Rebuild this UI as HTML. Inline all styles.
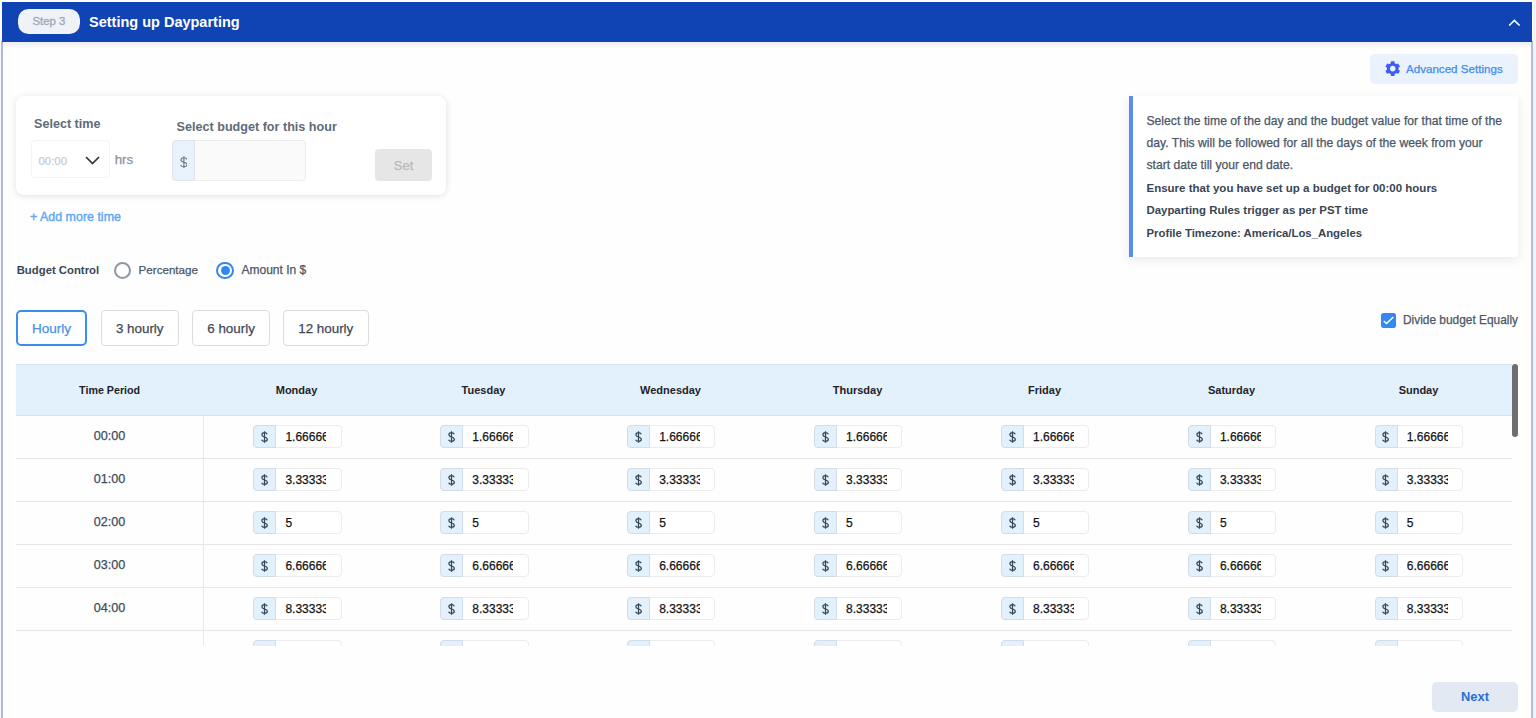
<!DOCTYPE html>
<html><head><meta charset="utf-8">
<style>
*{box-sizing:border-box;margin:0;padding:0}
html,body{width:1536px;height:718px;overflow:hidden;background:#fff;font-family:"Liberation Sans",sans-serif}
.b{position:absolute}
.t{position:absolute;white-space:nowrap;line-height:1}
</style></head><body>
<div class="b" style="left:0.00px;top:0.00px;width:1536.00px;height:718.00px;background:#fff"></div>
<div class="b" style="left:1533.00px;top:0.00px;width:3.00px;height:718.00px;background:#f3f4f5"></div>
<div class="b" style="left:0.00px;top:42.00px;width:1.00px;height:676.00px;background:#f7f7f4"></div>
<div class="b" style="left:2.00px;top:41.00px;width:1530.00px;height:677.00px;background:#fefefe"></div>
<div class="b" style="left:1.00px;top:41.00px;width:2.00px;height:677.00px;background:#aabae2"></div>
<div class="b" style="left:1531.00px;top:41.00px;width:2.00px;height:677.00px;background:#afbee2"></div>
<div class="b" style="left:2.00px;top:2.00px;width:1530.00px;height:40.00px;background:#1043b4"></div>
<div class="b" style="left:3.00px;top:42.00px;width:1528.00px;height:6.50px;background:linear-gradient(#eeeeee,rgba(254,254,254,0))"></div>
<div class="b" style="left:17.80px;top:9.40px;width:62.00px;height:24.50px;background:#eff2f7;border-radius:10.5px"></div>
<div class="t" style="left:32.50px;top:16.45px;font-size:11.4px;font-weight:normal;color:#9eabb8;-webkit-text-stroke:0.35px #9eabb8;">Step 3</div>
<div class="t" style="left:89.00px;top:15.03px;font-size:14.5px;font-weight:bold;color:#fff;">Setting up Dayparting</div>
<svg class="b" style="left:1508px;top:17.6px" width="13" height="10" viewBox="0 0 13 10"><path d="M1.7 7 L6.4 2.4 L11.1 7" stroke="#fff" stroke-width="1.7" fill="none" stroke-linecap="round"/></svg>
<div class="b" style="left:1370.00px;top:54.00px;width:148.00px;height:30.00px;background:#eaf2fd;border-radius:5px"></div>
<svg class="b" style="left:1384.8px;top:60.6px" width="15.4" height="15.4" viewBox="0 0 512 512"><path fill="#3d5cf5" d="M487.4 315.7l-42.6-24.6c4.3-23.2 4.3-47 0-70.2l42.6-24.6c4.9-2.8 7.1-8.6 5.5-14-11.1-35.6-30-67.8-54.7-94.6-3.8-4.1-10-5.1-14.8-2.3L380.8 110c-17.9-15.400-38.5-27.300-60.8-35.100V25.800c0-5.600-3.900-10.500-9.400-11.700-36.700-8.200-74.300-7.800-109.200 0-5.500 1.200-9.400 6.100-9.400 11.700V75c-22.200 7.900-42.800 19.800-60.800 35.100L88.700 85.500c-4.900-2.800-11-1.900-14.800 2.300-24.700 26.700-43.600 58.900-54.700 94.600-1.700 5.400.6 11.200 5.500 14L67.300 221c-4.300 23.200-4.300 47 0 70.200l-42.600 24.600c-4.900 2.800-7.100 8.600-5.500 14 11.100 35.600 30 67.800 54.700 94.600 3.800 4.100 10 5.100 14.800 2.300l42.600-24.600c17.900 15.400 38.500 27.300 60.800 35.100v49.200c0 5.600 3.900 10.500 9.400 11.700 36.700 8.200 74.300 7.800 109.200 0 5.500-1.200 9.400-6.100 9.400-11.700v-49.200c22.200-7.900 42.800-19.800 60.800-35.100l42.600 24.600c4.900 2.800 11 1.900 14.800-2.300 24.700-26.700 43.600-58.900 54.700-94.600 1.500-5.500-.7-11.300-5.600-14.100zM256 350c-51.900 0-94-42.100-94-94s42.100-94 94-94 94 42.100 94 94-42.100 94-94 94z"/></svg>
<div class="t" style="left:1406.00px;top:62.78px;font-size:11.6px;font-weight:normal;color:#3f8bf0;-webkit-text-stroke:0.25px #3f8bf0;">Advanced Settings</div>
<div class="b" style="left:16.00px;top:96.00px;width:429.50px;height:99.00px;background:#fff;border-radius:8px;box-shadow:0 1px 6px rgba(0,0,0,0.13)"></div>
<div class="t" style="left:34.00px;top:117.83px;font-size:12.6px;font-weight:bold;color:#5f6b78;">Select time</div>
<div class="b" style="left:30.50px;top:140.30px;width:79.50px;height:38.10px;background:#fff;border:1px solid #f3f3f3;border-radius:4px"></div>
<div class="t" style="left:38.50px;top:155.55px;font-size:11.4px;font-weight:normal;color:#c6ccd4;-webkit-text-stroke:0.25px #c6ccd4;">00:00</div>
<svg class="b" style="left:84px;top:154px" width="17" height="12" viewBox="0 0 17 12"><path d="M2 3 L8.5 9.6 L15 3" stroke="#333" stroke-width="1.7" fill="none"/></svg>
<div class="t" style="left:114.70px;top:152.74px;font-size:13.3px;font-weight:normal;color:#8a939e;-webkit-text-stroke:0.25px #8a939e;">hrs</div>
<div class="t" style="left:176.60px;top:120.73px;font-size:12.6px;font-weight:bold;color:#5f6b78;">Select budget for this hour</div>
<div class="b" style="left:172.00px;top:140.40px;width:134.00px;height:41.00px;background:#fafafa;border:1px solid #ececec;border-radius:4px"></div>
<div class="b" style="left:172.00px;top:140.40px;width:23.00px;height:41.00px;background:#e8f2fd;border:1px solid #dfe6ee;border-radius:4px 0 0 4px"></div>
<svg class="b" style="left:179.6px;top:155.6px" width="7.8" height="12.6" viewBox="0 0 7 12" preserveAspectRatio="none"><path d="M6.3 3.3 C5.8 2.3 4.8 1.7 3.5 1.7 C1.9 1.7 0.9 2.6 0.9 3.8 C0.9 5.2 2.1 5.6 3.5 6 C5.1 6.4 6.3 7 6.3 8.3 C6.3 9.6 5.1 10.3 3.5 10.3 C2.1 10.3 1 9.7 0.6 8.7 M3.5 0.2 V11.8" stroke="#6b7785" stroke-width="1.0" fill="none"/></svg>
<div class="b" style="left:375.00px;top:149.00px;width:57.00px;height:32.40px;background:#e6e6e6;border-radius:4px"></div>
<div class="t" style="left:103.50px;width:600px;text-align:center;top:159.00px;font-size:13px;font-weight:normal;color:#b9b9b9;-webkit-text-stroke:0.25px #b9b9b9;">Set</div>
<div class="t" style="left:30.00px;top:211.26px;font-size:12.45px;font-weight:normal;color:#63a6f5;-webkit-text-stroke:0.4px #63a6f5;">+ Add more time</div>
<div class="b" style="left:1129.00px;top:96.00px;width:389.00px;height:160.90px;background:#fff;box-shadow:0 3px 10px rgba(20,30,60,0.09)"></div>
<div class="b" style="left:1129.00px;top:96.00px;width:4.00px;height:160.90px;background:#5b8cf2"></div>
<div class="t" style="left:1146.50px;top:114.81px;font-size:12.16px;font-weight:normal;color:#4a5766;-webkit-text-stroke:0.25px #4a5766;">Select the time of the day and the budget value for that time of the</div>
<div class="t" style="left:1146.50px;top:137.11px;font-size:12.16px;font-weight:normal;color:#4a5766;-webkit-text-stroke:0.25px #4a5766;">day. This will be followed for all the days of the week from your</div>
<div class="t" style="left:1146.50px;top:159.41px;font-size:12.16px;font-weight:normal;color:#4a5766;-webkit-text-stroke:0.25px #4a5766;">start date till your end date.</div>
<div class="t" style="left:1146.50px;top:182.87px;font-size:11.5px;font-weight:bold;color:#384554;">Ensure that you have set up a budget for 00:00 hours</div>
<div class="t" style="left:1146.50px;top:205.25px;font-size:11.4px;font-weight:bold;color:#384554;">Dayparting Rules trigger as per PST time</div>
<div class="t" style="left:1146.50px;top:227.59px;font-size:11.35px;font-weight:bold;color:#384554;">Profile Timezone: America/Los_Angeles</div>
<div class="t" style="left:16.70px;top:265.00px;font-size:11.34px;font-weight:bold;color:#3a4756;">Budget Control</div>
<div class="b" style="left:113.50px;top:261.80px;width:17.60px;height:17.60px;border:2px solid #8f98a2;border-radius:50%;background:#fff"></div>
<div class="t" style="left:138.60px;top:263.88px;font-size:11.6px;font-weight:normal;color:#4a5766;-webkit-text-stroke:0.25px #4a5766;">Percentage</div>
<div class="b" style="left:216.10px;top:261.80px;width:17.70px;height:17.70px;border:2px solid #3487f0;border-radius:50%;background:#fff"></div>
<div class="b" style="left:220.50px;top:266.20px;width:9.00px;height:9.00px;background:#3487f0;border-radius:50%"></div>
<div class="t" style="left:241.50px;top:264.44px;font-size:12.0px;font-weight:normal;color:#4a5766;-webkit-text-stroke:0.25px #4a5766;">Amount In $</div>
<div class="b" style="left:16.00px;top:310.30px;width:71.10px;height:35.40px;border:2px solid #3a8ef0;border-radius:5px;background:#fff"></div>
<div class="t" style="left:-248.45px;width:600px;text-align:center;top:322.27px;font-size:13.5px;font-weight:normal;color:#4a91e6;-webkit-text-stroke:0.25px #4a91e6;">Hourly</div>
<div class="b" style="left:100.80px;top:310.30px;width:77.80px;height:35.40px;border:1px solid #dcdcdc;border-radius:4px;background:#fff"></div>
<div class="t" style="left:-160.30px;width:600px;text-align:center;top:322.36px;font-size:13.4px;font-weight:normal;color:#3f4a58;-webkit-text-stroke:0.25px #3f4a58;">3 hourly</div>
<div class="b" style="left:192.40px;top:310.30px;width:77.30px;height:35.40px;border:1px solid #dcdcdc;border-radius:4px;background:#fff"></div>
<div class="t" style="left:-68.95px;width:600px;text-align:center;top:322.36px;font-size:13.4px;font-weight:normal;color:#3f4a58;-webkit-text-stroke:0.25px #3f4a58;">6 hourly</div>
<div class="b" style="left:283.00px;top:310.30px;width:85.50px;height:35.40px;border:1px solid #dcdcdc;border-radius:4px;background:#fff"></div>
<div class="t" style="left:25.75px;width:600px;text-align:center;top:322.36px;font-size:13.4px;font-weight:normal;color:#3f4a58;-webkit-text-stroke:0.25px #3f4a58;">12 hourly</div>
<div class="b" style="left:1381.20px;top:313.10px;width:14.70px;height:14.80px;background:#3389f0;border-radius:2.5px"></div>
<svg class="b" style="left:1381.2px;top:313.3px" width="15" height="15" viewBox="0 0 15 15"><path d="M2.7 8 L5.5 10.6 L12.4 3.9" stroke="#fff" stroke-width="1.4" fill="none"/></svg>
<div class="t" style="left:1403.00px;top:315.23px;font-size:11.9px;font-weight:normal;color:#4a5766;-webkit-text-stroke:0.25px #4a5766;">Divide budget Equally</div>
<div class="b" style="left:16.00px;top:364.00px;width:1496.00px;height:52.00px;background:#e3f1fd;border-top:1px solid #d6e3ef;border-bottom:1px solid #dde3ea"></div>
<div class="t" style="left:-190.40px;width:600px;text-align:center;top:385.04px;font-size:10.7px;font-weight:bold;color:#1f2328;">Time Period</div>
<div class="t" style="left:-3.50px;width:600px;text-align:center;top:384.79px;font-size:11.0px;font-weight:bold;color:#1f2328;">Monday</div>
<div class="t" style="left:183.50px;width:600px;text-align:center;top:384.79px;font-size:11.0px;font-weight:bold;color:#1f2328;">Tuesday</div>
<div class="t" style="left:370.50px;width:600px;text-align:center;top:384.79px;font-size:11.0px;font-weight:bold;color:#1f2328;">Wednesday</div>
<div class="t" style="left:557.50px;width:600px;text-align:center;top:384.79px;font-size:11.0px;font-weight:bold;color:#1f2328;">Thursday</div>
<div class="t" style="left:744.50px;width:600px;text-align:center;top:384.79px;font-size:11.0px;font-weight:bold;color:#1f2328;">Friday</div>
<div class="t" style="left:931.50px;width:600px;text-align:center;top:384.79px;font-size:11.0px;font-weight:bold;color:#1f2328;">Saturday</div>
<div class="t" style="left:1118.50px;width:600px;text-align:center;top:384.79px;font-size:11.0px;font-weight:bold;color:#1f2328;">Sunday</div>
<div class="b" style="left:16px;top:415.5px;width:1496px;height:230.5px;overflow:hidden">
<div class="b" style="left:187.00px;top:0.00px;width:1.00px;height:230.50px;background:#e8e8e8"></div>
<div class="b" style="left:0.00px;top:42.50px;width:1496.00px;height:1.00px;background:#e6e6e6"></div>
<div class="t" style="left:-206.40px;width:600px;text-align:center;top:14.23px;font-size:12.6px;font-weight:normal;color:#3e4c5c;-webkit-text-stroke:0.25px #3e4c5c;">00:00</div>
<div class="b" style="left:237.10px;top:9.30px;width:88.50px;height:23.20px;background:#fff;border:1px solid #ececec;border-radius:4px"></div>
<div class="b" style="left:237.10px;top:9.30px;width:23.30px;height:23.20px;background:#e3f1fd;border:1px solid #d3dde8;border-radius:4px 0 0 4px"></div>
<svg class="b" style="left:245.00px;top:15.40px" width="7" height="12" viewBox="0 0 7 12"><path d="M6.3 3.3 C5.8 2.3 4.8 1.7 3.5 1.7 C1.9 1.7 0.9 2.6 0.9 3.8 C0.9 5.2 2.1 5.6 3.5 6 C5.1 6.4 6.3 7 6.3 8.3 C6.3 9.6 5.1 10.3 3.5 10.3 C2.1 10.3 1 9.7 0.6 8.7 M3.5 0.2 V11.8" stroke="#34475b" stroke-width="1.25" fill="none"/></svg>
<div class="b" style="left:269.40px;top:13.50px;width:40.8px;height:16px;overflow:hidden"><div class="t" style="left:0;top:1.64px;font-size:12px;color:#151515;-webkit-text-stroke:0.25px #151515">1.666666667</div></div>
<div class="b" style="left:424.00px;top:9.30px;width:88.50px;height:23.20px;background:#fff;border:1px solid #ececec;border-radius:4px"></div>
<div class="b" style="left:424.00px;top:9.30px;width:23.30px;height:23.20px;background:#e3f1fd;border:1px solid #d3dde8;border-radius:4px 0 0 4px"></div>
<svg class="b" style="left:431.90px;top:15.40px" width="7" height="12" viewBox="0 0 7 12"><path d="M6.3 3.3 C5.8 2.3 4.8 1.7 3.5 1.7 C1.9 1.7 0.9 2.6 0.9 3.8 C0.9 5.2 2.1 5.6 3.5 6 C5.1 6.4 6.3 7 6.3 8.3 C6.3 9.6 5.1 10.3 3.5 10.3 C2.1 10.3 1 9.7 0.6 8.7 M3.5 0.2 V11.8" stroke="#34475b" stroke-width="1.25" fill="none"/></svg>
<div class="b" style="left:456.30px;top:13.50px;width:40.8px;height:16px;overflow:hidden"><div class="t" style="left:0;top:1.64px;font-size:12px;color:#151515;-webkit-text-stroke:0.25px #151515">1.666666667</div></div>
<div class="b" style="left:610.90px;top:9.30px;width:88.50px;height:23.20px;background:#fff;border:1px solid #ececec;border-radius:4px"></div>
<div class="b" style="left:610.90px;top:9.30px;width:23.30px;height:23.20px;background:#e3f1fd;border:1px solid #d3dde8;border-radius:4px 0 0 4px"></div>
<svg class="b" style="left:618.80px;top:15.40px" width="7" height="12" viewBox="0 0 7 12"><path d="M6.3 3.3 C5.8 2.3 4.8 1.7 3.5 1.7 C1.9 1.7 0.9 2.6 0.9 3.8 C0.9 5.2 2.1 5.6 3.5 6 C5.1 6.4 6.3 7 6.3 8.3 C6.3 9.6 5.1 10.3 3.5 10.3 C2.1 10.3 1 9.7 0.6 8.7 M3.5 0.2 V11.8" stroke="#34475b" stroke-width="1.25" fill="none"/></svg>
<div class="b" style="left:643.20px;top:13.50px;width:40.8px;height:16px;overflow:hidden"><div class="t" style="left:0;top:1.64px;font-size:12px;color:#151515;-webkit-text-stroke:0.25px #151515">1.666666667</div></div>
<div class="b" style="left:797.80px;top:9.30px;width:88.50px;height:23.20px;background:#fff;border:1px solid #ececec;border-radius:4px"></div>
<div class="b" style="left:797.80px;top:9.30px;width:23.30px;height:23.20px;background:#e3f1fd;border:1px solid #d3dde8;border-radius:4px 0 0 4px"></div>
<svg class="b" style="left:805.70px;top:15.40px" width="7" height="12" viewBox="0 0 7 12"><path d="M6.3 3.3 C5.8 2.3 4.8 1.7 3.5 1.7 C1.9 1.7 0.9 2.6 0.9 3.8 C0.9 5.2 2.1 5.6 3.5 6 C5.1 6.4 6.3 7 6.3 8.3 C6.3 9.6 5.1 10.3 3.5 10.3 C2.1 10.3 1 9.7 0.6 8.7 M3.5 0.2 V11.8" stroke="#34475b" stroke-width="1.25" fill="none"/></svg>
<div class="b" style="left:830.10px;top:13.50px;width:40.8px;height:16px;overflow:hidden"><div class="t" style="left:0;top:1.64px;font-size:12px;color:#151515;-webkit-text-stroke:0.25px #151515">1.666666667</div></div>
<div class="b" style="left:984.70px;top:9.30px;width:88.50px;height:23.20px;background:#fff;border:1px solid #ececec;border-radius:4px"></div>
<div class="b" style="left:984.70px;top:9.30px;width:23.30px;height:23.20px;background:#e3f1fd;border:1px solid #d3dde8;border-radius:4px 0 0 4px"></div>
<svg class="b" style="left:992.60px;top:15.40px" width="7" height="12" viewBox="0 0 7 12"><path d="M6.3 3.3 C5.8 2.3 4.8 1.7 3.5 1.7 C1.9 1.7 0.9 2.6 0.9 3.8 C0.9 5.2 2.1 5.6 3.5 6 C5.1 6.4 6.3 7 6.3 8.3 C6.3 9.6 5.1 10.3 3.5 10.3 C2.1 10.3 1 9.7 0.6 8.7 M3.5 0.2 V11.8" stroke="#34475b" stroke-width="1.25" fill="none"/></svg>
<div class="b" style="left:1017.00px;top:13.50px;width:40.8px;height:16px;overflow:hidden"><div class="t" style="left:0;top:1.64px;font-size:12px;color:#151515;-webkit-text-stroke:0.25px #151515">1.666666667</div></div>
<div class="b" style="left:1171.60px;top:9.30px;width:88.50px;height:23.20px;background:#fff;border:1px solid #ececec;border-radius:4px"></div>
<div class="b" style="left:1171.60px;top:9.30px;width:23.30px;height:23.20px;background:#e3f1fd;border:1px solid #d3dde8;border-radius:4px 0 0 4px"></div>
<svg class="b" style="left:1179.50px;top:15.40px" width="7" height="12" viewBox="0 0 7 12"><path d="M6.3 3.3 C5.8 2.3 4.8 1.7 3.5 1.7 C1.9 1.7 0.9 2.6 0.9 3.8 C0.9 5.2 2.1 5.6 3.5 6 C5.1 6.4 6.3 7 6.3 8.3 C6.3 9.6 5.1 10.3 3.5 10.3 C2.1 10.3 1 9.7 0.6 8.7 M3.5 0.2 V11.8" stroke="#34475b" stroke-width="1.25" fill="none"/></svg>
<div class="b" style="left:1203.90px;top:13.50px;width:40.8px;height:16px;overflow:hidden"><div class="t" style="left:0;top:1.64px;font-size:12px;color:#151515;-webkit-text-stroke:0.25px #151515">1.666666667</div></div>
<div class="b" style="left:1358.50px;top:9.30px;width:88.50px;height:23.20px;background:#fff;border:1px solid #ececec;border-radius:4px"></div>
<div class="b" style="left:1358.50px;top:9.30px;width:23.30px;height:23.20px;background:#e3f1fd;border:1px solid #d3dde8;border-radius:4px 0 0 4px"></div>
<svg class="b" style="left:1366.40px;top:15.40px" width="7" height="12" viewBox="0 0 7 12"><path d="M6.3 3.3 C5.8 2.3 4.8 1.7 3.5 1.7 C1.9 1.7 0.9 2.6 0.9 3.8 C0.9 5.2 2.1 5.6 3.5 6 C5.1 6.4 6.3 7 6.3 8.3 C6.3 9.6 5.1 10.3 3.5 10.3 C2.1 10.3 1 9.7 0.6 8.7 M3.5 0.2 V11.8" stroke="#34475b" stroke-width="1.25" fill="none"/></svg>
<div class="b" style="left:1390.80px;top:13.50px;width:40.8px;height:16px;overflow:hidden"><div class="t" style="left:0;top:1.64px;font-size:12px;color:#151515;-webkit-text-stroke:0.25px #151515">1.666666667</div></div>
<div class="b" style="left:0.00px;top:85.50px;width:1496.00px;height:1.00px;background:#e6e6e6"></div>
<div class="t" style="left:-206.40px;width:600px;text-align:center;top:57.23px;font-size:12.6px;font-weight:normal;color:#3e4c5c;-webkit-text-stroke:0.25px #3e4c5c;">01:00</div>
<div class="b" style="left:237.10px;top:52.30px;width:88.50px;height:23.20px;background:#fff;border:1px solid #ececec;border-radius:4px"></div>
<div class="b" style="left:237.10px;top:52.30px;width:23.30px;height:23.20px;background:#e3f1fd;border:1px solid #d3dde8;border-radius:4px 0 0 4px"></div>
<svg class="b" style="left:245.00px;top:58.40px" width="7" height="12" viewBox="0 0 7 12"><path d="M6.3 3.3 C5.8 2.3 4.8 1.7 3.5 1.7 C1.9 1.7 0.9 2.6 0.9 3.8 C0.9 5.2 2.1 5.6 3.5 6 C5.1 6.4 6.3 7 6.3 8.3 C6.3 9.6 5.1 10.3 3.5 10.3 C2.1 10.3 1 9.7 0.6 8.7 M3.5 0.2 V11.8" stroke="#34475b" stroke-width="1.25" fill="none"/></svg>
<div class="b" style="left:269.40px;top:56.50px;width:40.8px;height:16px;overflow:hidden"><div class="t" style="left:0;top:1.64px;font-size:12px;color:#151515;-webkit-text-stroke:0.25px #151515">3.333333333</div></div>
<div class="b" style="left:424.00px;top:52.30px;width:88.50px;height:23.20px;background:#fff;border:1px solid #ececec;border-radius:4px"></div>
<div class="b" style="left:424.00px;top:52.30px;width:23.30px;height:23.20px;background:#e3f1fd;border:1px solid #d3dde8;border-radius:4px 0 0 4px"></div>
<svg class="b" style="left:431.90px;top:58.40px" width="7" height="12" viewBox="0 0 7 12"><path d="M6.3 3.3 C5.8 2.3 4.8 1.7 3.5 1.7 C1.9 1.7 0.9 2.6 0.9 3.8 C0.9 5.2 2.1 5.6 3.5 6 C5.1 6.4 6.3 7 6.3 8.3 C6.3 9.6 5.1 10.3 3.5 10.3 C2.1 10.3 1 9.7 0.6 8.7 M3.5 0.2 V11.8" stroke="#34475b" stroke-width="1.25" fill="none"/></svg>
<div class="b" style="left:456.30px;top:56.50px;width:40.8px;height:16px;overflow:hidden"><div class="t" style="left:0;top:1.64px;font-size:12px;color:#151515;-webkit-text-stroke:0.25px #151515">3.333333333</div></div>
<div class="b" style="left:610.90px;top:52.30px;width:88.50px;height:23.20px;background:#fff;border:1px solid #ececec;border-radius:4px"></div>
<div class="b" style="left:610.90px;top:52.30px;width:23.30px;height:23.20px;background:#e3f1fd;border:1px solid #d3dde8;border-radius:4px 0 0 4px"></div>
<svg class="b" style="left:618.80px;top:58.40px" width="7" height="12" viewBox="0 0 7 12"><path d="M6.3 3.3 C5.8 2.3 4.8 1.7 3.5 1.7 C1.9 1.7 0.9 2.6 0.9 3.8 C0.9 5.2 2.1 5.6 3.5 6 C5.1 6.4 6.3 7 6.3 8.3 C6.3 9.6 5.1 10.3 3.5 10.3 C2.1 10.3 1 9.7 0.6 8.7 M3.5 0.2 V11.8" stroke="#34475b" stroke-width="1.25" fill="none"/></svg>
<div class="b" style="left:643.20px;top:56.50px;width:40.8px;height:16px;overflow:hidden"><div class="t" style="left:0;top:1.64px;font-size:12px;color:#151515;-webkit-text-stroke:0.25px #151515">3.333333333</div></div>
<div class="b" style="left:797.80px;top:52.30px;width:88.50px;height:23.20px;background:#fff;border:1px solid #ececec;border-radius:4px"></div>
<div class="b" style="left:797.80px;top:52.30px;width:23.30px;height:23.20px;background:#e3f1fd;border:1px solid #d3dde8;border-radius:4px 0 0 4px"></div>
<svg class="b" style="left:805.70px;top:58.40px" width="7" height="12" viewBox="0 0 7 12"><path d="M6.3 3.3 C5.8 2.3 4.8 1.7 3.5 1.7 C1.9 1.7 0.9 2.6 0.9 3.8 C0.9 5.2 2.1 5.6 3.5 6 C5.1 6.4 6.3 7 6.3 8.3 C6.3 9.6 5.1 10.3 3.5 10.3 C2.1 10.3 1 9.7 0.6 8.7 M3.5 0.2 V11.8" stroke="#34475b" stroke-width="1.25" fill="none"/></svg>
<div class="b" style="left:830.10px;top:56.50px;width:40.8px;height:16px;overflow:hidden"><div class="t" style="left:0;top:1.64px;font-size:12px;color:#151515;-webkit-text-stroke:0.25px #151515">3.333333333</div></div>
<div class="b" style="left:984.70px;top:52.30px;width:88.50px;height:23.20px;background:#fff;border:1px solid #ececec;border-radius:4px"></div>
<div class="b" style="left:984.70px;top:52.30px;width:23.30px;height:23.20px;background:#e3f1fd;border:1px solid #d3dde8;border-radius:4px 0 0 4px"></div>
<svg class="b" style="left:992.60px;top:58.40px" width="7" height="12" viewBox="0 0 7 12"><path d="M6.3 3.3 C5.8 2.3 4.8 1.7 3.5 1.7 C1.9 1.7 0.9 2.6 0.9 3.8 C0.9 5.2 2.1 5.6 3.5 6 C5.1 6.4 6.3 7 6.3 8.3 C6.3 9.6 5.1 10.3 3.5 10.3 C2.1 10.3 1 9.7 0.6 8.7 M3.5 0.2 V11.8" stroke="#34475b" stroke-width="1.25" fill="none"/></svg>
<div class="b" style="left:1017.00px;top:56.50px;width:40.8px;height:16px;overflow:hidden"><div class="t" style="left:0;top:1.64px;font-size:12px;color:#151515;-webkit-text-stroke:0.25px #151515">3.333333333</div></div>
<div class="b" style="left:1171.60px;top:52.30px;width:88.50px;height:23.20px;background:#fff;border:1px solid #ececec;border-radius:4px"></div>
<div class="b" style="left:1171.60px;top:52.30px;width:23.30px;height:23.20px;background:#e3f1fd;border:1px solid #d3dde8;border-radius:4px 0 0 4px"></div>
<svg class="b" style="left:1179.50px;top:58.40px" width="7" height="12" viewBox="0 0 7 12"><path d="M6.3 3.3 C5.8 2.3 4.8 1.7 3.5 1.7 C1.9 1.7 0.9 2.6 0.9 3.8 C0.9 5.2 2.1 5.6 3.5 6 C5.1 6.4 6.3 7 6.3 8.3 C6.3 9.6 5.1 10.3 3.5 10.3 C2.1 10.3 1 9.7 0.6 8.7 M3.5 0.2 V11.8" stroke="#34475b" stroke-width="1.25" fill="none"/></svg>
<div class="b" style="left:1203.90px;top:56.50px;width:40.8px;height:16px;overflow:hidden"><div class="t" style="left:0;top:1.64px;font-size:12px;color:#151515;-webkit-text-stroke:0.25px #151515">3.333333333</div></div>
<div class="b" style="left:1358.50px;top:52.30px;width:88.50px;height:23.20px;background:#fff;border:1px solid #ececec;border-radius:4px"></div>
<div class="b" style="left:1358.50px;top:52.30px;width:23.30px;height:23.20px;background:#e3f1fd;border:1px solid #d3dde8;border-radius:4px 0 0 4px"></div>
<svg class="b" style="left:1366.40px;top:58.40px" width="7" height="12" viewBox="0 0 7 12"><path d="M6.3 3.3 C5.8 2.3 4.8 1.7 3.5 1.7 C1.9 1.7 0.9 2.6 0.9 3.8 C0.9 5.2 2.1 5.6 3.5 6 C5.1 6.4 6.3 7 6.3 8.3 C6.3 9.6 5.1 10.3 3.5 10.3 C2.1 10.3 1 9.7 0.6 8.7 M3.5 0.2 V11.8" stroke="#34475b" stroke-width="1.25" fill="none"/></svg>
<div class="b" style="left:1390.80px;top:56.50px;width:40.8px;height:16px;overflow:hidden"><div class="t" style="left:0;top:1.64px;font-size:12px;color:#151515;-webkit-text-stroke:0.25px #151515">3.333333333</div></div>
<div class="b" style="left:0.00px;top:128.50px;width:1496.00px;height:1.00px;background:#e6e6e6"></div>
<div class="t" style="left:-206.40px;width:600px;text-align:center;top:100.23px;font-size:12.6px;font-weight:normal;color:#3e4c5c;-webkit-text-stroke:0.25px #3e4c5c;">02:00</div>
<div class="b" style="left:237.10px;top:95.30px;width:88.50px;height:23.20px;background:#fff;border:1px solid #ececec;border-radius:4px"></div>
<div class="b" style="left:237.10px;top:95.30px;width:23.30px;height:23.20px;background:#e3f1fd;border:1px solid #d3dde8;border-radius:4px 0 0 4px"></div>
<svg class="b" style="left:245.00px;top:101.40px" width="7" height="12" viewBox="0 0 7 12"><path d="M6.3 3.3 C5.8 2.3 4.8 1.7 3.5 1.7 C1.9 1.7 0.9 2.6 0.9 3.8 C0.9 5.2 2.1 5.6 3.5 6 C5.1 6.4 6.3 7 6.3 8.3 C6.3 9.6 5.1 10.3 3.5 10.3 C2.1 10.3 1 9.7 0.6 8.7 M3.5 0.2 V11.8" stroke="#34475b" stroke-width="1.25" fill="none"/></svg>
<div class="b" style="left:269.40px;top:99.50px;width:40.8px;height:16px;overflow:hidden"><div class="t" style="left:0;top:1.64px;font-size:12px;color:#151515;-webkit-text-stroke:0.25px #151515">5</div></div>
<div class="b" style="left:424.00px;top:95.30px;width:88.50px;height:23.20px;background:#fff;border:1px solid #ececec;border-radius:4px"></div>
<div class="b" style="left:424.00px;top:95.30px;width:23.30px;height:23.20px;background:#e3f1fd;border:1px solid #d3dde8;border-radius:4px 0 0 4px"></div>
<svg class="b" style="left:431.90px;top:101.40px" width="7" height="12" viewBox="0 0 7 12"><path d="M6.3 3.3 C5.8 2.3 4.8 1.7 3.5 1.7 C1.9 1.7 0.9 2.6 0.9 3.8 C0.9 5.2 2.1 5.6 3.5 6 C5.1 6.4 6.3 7 6.3 8.3 C6.3 9.6 5.1 10.3 3.5 10.3 C2.1 10.3 1 9.7 0.6 8.7 M3.5 0.2 V11.8" stroke="#34475b" stroke-width="1.25" fill="none"/></svg>
<div class="b" style="left:456.30px;top:99.50px;width:40.8px;height:16px;overflow:hidden"><div class="t" style="left:0;top:1.64px;font-size:12px;color:#151515;-webkit-text-stroke:0.25px #151515">5</div></div>
<div class="b" style="left:610.90px;top:95.30px;width:88.50px;height:23.20px;background:#fff;border:1px solid #ececec;border-radius:4px"></div>
<div class="b" style="left:610.90px;top:95.30px;width:23.30px;height:23.20px;background:#e3f1fd;border:1px solid #d3dde8;border-radius:4px 0 0 4px"></div>
<svg class="b" style="left:618.80px;top:101.40px" width="7" height="12" viewBox="0 0 7 12"><path d="M6.3 3.3 C5.8 2.3 4.8 1.7 3.5 1.7 C1.9 1.7 0.9 2.6 0.9 3.8 C0.9 5.2 2.1 5.6 3.5 6 C5.1 6.4 6.3 7 6.3 8.3 C6.3 9.6 5.1 10.3 3.5 10.3 C2.1 10.3 1 9.7 0.6 8.7 M3.5 0.2 V11.8" stroke="#34475b" stroke-width="1.25" fill="none"/></svg>
<div class="b" style="left:643.20px;top:99.50px;width:40.8px;height:16px;overflow:hidden"><div class="t" style="left:0;top:1.64px;font-size:12px;color:#151515;-webkit-text-stroke:0.25px #151515">5</div></div>
<div class="b" style="left:797.80px;top:95.30px;width:88.50px;height:23.20px;background:#fff;border:1px solid #ececec;border-radius:4px"></div>
<div class="b" style="left:797.80px;top:95.30px;width:23.30px;height:23.20px;background:#e3f1fd;border:1px solid #d3dde8;border-radius:4px 0 0 4px"></div>
<svg class="b" style="left:805.70px;top:101.40px" width="7" height="12" viewBox="0 0 7 12"><path d="M6.3 3.3 C5.8 2.3 4.8 1.7 3.5 1.7 C1.9 1.7 0.9 2.6 0.9 3.8 C0.9 5.2 2.1 5.6 3.5 6 C5.1 6.4 6.3 7 6.3 8.3 C6.3 9.6 5.1 10.3 3.5 10.3 C2.1 10.3 1 9.7 0.6 8.7 M3.5 0.2 V11.8" stroke="#34475b" stroke-width="1.25" fill="none"/></svg>
<div class="b" style="left:830.10px;top:99.50px;width:40.8px;height:16px;overflow:hidden"><div class="t" style="left:0;top:1.64px;font-size:12px;color:#151515;-webkit-text-stroke:0.25px #151515">5</div></div>
<div class="b" style="left:984.70px;top:95.30px;width:88.50px;height:23.20px;background:#fff;border:1px solid #ececec;border-radius:4px"></div>
<div class="b" style="left:984.70px;top:95.30px;width:23.30px;height:23.20px;background:#e3f1fd;border:1px solid #d3dde8;border-radius:4px 0 0 4px"></div>
<svg class="b" style="left:992.60px;top:101.40px" width="7" height="12" viewBox="0 0 7 12"><path d="M6.3 3.3 C5.8 2.3 4.8 1.7 3.5 1.7 C1.9 1.7 0.9 2.6 0.9 3.8 C0.9 5.2 2.1 5.6 3.5 6 C5.1 6.4 6.3 7 6.3 8.3 C6.3 9.6 5.1 10.3 3.5 10.3 C2.1 10.3 1 9.7 0.6 8.7 M3.5 0.2 V11.8" stroke="#34475b" stroke-width="1.25" fill="none"/></svg>
<div class="b" style="left:1017.00px;top:99.50px;width:40.8px;height:16px;overflow:hidden"><div class="t" style="left:0;top:1.64px;font-size:12px;color:#151515;-webkit-text-stroke:0.25px #151515">5</div></div>
<div class="b" style="left:1171.60px;top:95.30px;width:88.50px;height:23.20px;background:#fff;border:1px solid #ececec;border-radius:4px"></div>
<div class="b" style="left:1171.60px;top:95.30px;width:23.30px;height:23.20px;background:#e3f1fd;border:1px solid #d3dde8;border-radius:4px 0 0 4px"></div>
<svg class="b" style="left:1179.50px;top:101.40px" width="7" height="12" viewBox="0 0 7 12"><path d="M6.3 3.3 C5.8 2.3 4.8 1.7 3.5 1.7 C1.9 1.7 0.9 2.6 0.9 3.8 C0.9 5.2 2.1 5.6 3.5 6 C5.1 6.4 6.3 7 6.3 8.3 C6.3 9.6 5.1 10.3 3.5 10.3 C2.1 10.3 1 9.7 0.6 8.7 M3.5 0.2 V11.8" stroke="#34475b" stroke-width="1.25" fill="none"/></svg>
<div class="b" style="left:1203.90px;top:99.50px;width:40.8px;height:16px;overflow:hidden"><div class="t" style="left:0;top:1.64px;font-size:12px;color:#151515;-webkit-text-stroke:0.25px #151515">5</div></div>
<div class="b" style="left:1358.50px;top:95.30px;width:88.50px;height:23.20px;background:#fff;border:1px solid #ececec;border-radius:4px"></div>
<div class="b" style="left:1358.50px;top:95.30px;width:23.30px;height:23.20px;background:#e3f1fd;border:1px solid #d3dde8;border-radius:4px 0 0 4px"></div>
<svg class="b" style="left:1366.40px;top:101.40px" width="7" height="12" viewBox="0 0 7 12"><path d="M6.3 3.3 C5.8 2.3 4.8 1.7 3.5 1.7 C1.9 1.7 0.9 2.6 0.9 3.8 C0.9 5.2 2.1 5.6 3.5 6 C5.1 6.4 6.3 7 6.3 8.3 C6.3 9.6 5.1 10.3 3.5 10.3 C2.1 10.3 1 9.7 0.6 8.7 M3.5 0.2 V11.8" stroke="#34475b" stroke-width="1.25" fill="none"/></svg>
<div class="b" style="left:1390.80px;top:99.50px;width:40.8px;height:16px;overflow:hidden"><div class="t" style="left:0;top:1.64px;font-size:12px;color:#151515;-webkit-text-stroke:0.25px #151515">5</div></div>
<div class="b" style="left:0.00px;top:171.50px;width:1496.00px;height:1.00px;background:#e6e6e6"></div>
<div class="t" style="left:-206.40px;width:600px;text-align:center;top:143.23px;font-size:12.6px;font-weight:normal;color:#3e4c5c;-webkit-text-stroke:0.25px #3e4c5c;">03:00</div>
<div class="b" style="left:237.10px;top:138.30px;width:88.50px;height:23.20px;background:#fff;border:1px solid #ececec;border-radius:4px"></div>
<div class="b" style="left:237.10px;top:138.30px;width:23.30px;height:23.20px;background:#e3f1fd;border:1px solid #d3dde8;border-radius:4px 0 0 4px"></div>
<svg class="b" style="left:245.00px;top:144.40px" width="7" height="12" viewBox="0 0 7 12"><path d="M6.3 3.3 C5.8 2.3 4.8 1.7 3.5 1.7 C1.9 1.7 0.9 2.6 0.9 3.8 C0.9 5.2 2.1 5.6 3.5 6 C5.1 6.4 6.3 7 6.3 8.3 C6.3 9.6 5.1 10.3 3.5 10.3 C2.1 10.3 1 9.7 0.6 8.7 M3.5 0.2 V11.8" stroke="#34475b" stroke-width="1.25" fill="none"/></svg>
<div class="b" style="left:269.40px;top:142.50px;width:40.8px;height:16px;overflow:hidden"><div class="t" style="left:0;top:1.64px;font-size:12px;color:#151515;-webkit-text-stroke:0.25px #151515">6.666666667</div></div>
<div class="b" style="left:424.00px;top:138.30px;width:88.50px;height:23.20px;background:#fff;border:1px solid #ececec;border-radius:4px"></div>
<div class="b" style="left:424.00px;top:138.30px;width:23.30px;height:23.20px;background:#e3f1fd;border:1px solid #d3dde8;border-radius:4px 0 0 4px"></div>
<svg class="b" style="left:431.90px;top:144.40px" width="7" height="12" viewBox="0 0 7 12"><path d="M6.3 3.3 C5.8 2.3 4.8 1.7 3.5 1.7 C1.9 1.7 0.9 2.6 0.9 3.8 C0.9 5.2 2.1 5.6 3.5 6 C5.1 6.4 6.3 7 6.3 8.3 C6.3 9.6 5.1 10.3 3.5 10.3 C2.1 10.3 1 9.7 0.6 8.7 M3.5 0.2 V11.8" stroke="#34475b" stroke-width="1.25" fill="none"/></svg>
<div class="b" style="left:456.30px;top:142.50px;width:40.8px;height:16px;overflow:hidden"><div class="t" style="left:0;top:1.64px;font-size:12px;color:#151515;-webkit-text-stroke:0.25px #151515">6.666666667</div></div>
<div class="b" style="left:610.90px;top:138.30px;width:88.50px;height:23.20px;background:#fff;border:1px solid #ececec;border-radius:4px"></div>
<div class="b" style="left:610.90px;top:138.30px;width:23.30px;height:23.20px;background:#e3f1fd;border:1px solid #d3dde8;border-radius:4px 0 0 4px"></div>
<svg class="b" style="left:618.80px;top:144.40px" width="7" height="12" viewBox="0 0 7 12"><path d="M6.3 3.3 C5.8 2.3 4.8 1.7 3.5 1.7 C1.9 1.7 0.9 2.6 0.9 3.8 C0.9 5.2 2.1 5.6 3.5 6 C5.1 6.4 6.3 7 6.3 8.3 C6.3 9.6 5.1 10.3 3.5 10.3 C2.1 10.3 1 9.7 0.6 8.7 M3.5 0.2 V11.8" stroke="#34475b" stroke-width="1.25" fill="none"/></svg>
<div class="b" style="left:643.20px;top:142.50px;width:40.8px;height:16px;overflow:hidden"><div class="t" style="left:0;top:1.64px;font-size:12px;color:#151515;-webkit-text-stroke:0.25px #151515">6.666666667</div></div>
<div class="b" style="left:797.80px;top:138.30px;width:88.50px;height:23.20px;background:#fff;border:1px solid #ececec;border-radius:4px"></div>
<div class="b" style="left:797.80px;top:138.30px;width:23.30px;height:23.20px;background:#e3f1fd;border:1px solid #d3dde8;border-radius:4px 0 0 4px"></div>
<svg class="b" style="left:805.70px;top:144.40px" width="7" height="12" viewBox="0 0 7 12"><path d="M6.3 3.3 C5.8 2.3 4.8 1.7 3.5 1.7 C1.9 1.7 0.9 2.6 0.9 3.8 C0.9 5.2 2.1 5.6 3.5 6 C5.1 6.4 6.3 7 6.3 8.3 C6.3 9.6 5.1 10.3 3.5 10.3 C2.1 10.3 1 9.7 0.6 8.7 M3.5 0.2 V11.8" stroke="#34475b" stroke-width="1.25" fill="none"/></svg>
<div class="b" style="left:830.10px;top:142.50px;width:40.8px;height:16px;overflow:hidden"><div class="t" style="left:0;top:1.64px;font-size:12px;color:#151515;-webkit-text-stroke:0.25px #151515">6.666666667</div></div>
<div class="b" style="left:984.70px;top:138.30px;width:88.50px;height:23.20px;background:#fff;border:1px solid #ececec;border-radius:4px"></div>
<div class="b" style="left:984.70px;top:138.30px;width:23.30px;height:23.20px;background:#e3f1fd;border:1px solid #d3dde8;border-radius:4px 0 0 4px"></div>
<svg class="b" style="left:992.60px;top:144.40px" width="7" height="12" viewBox="0 0 7 12"><path d="M6.3 3.3 C5.8 2.3 4.8 1.7 3.5 1.7 C1.9 1.7 0.9 2.6 0.9 3.8 C0.9 5.2 2.1 5.6 3.5 6 C5.1 6.4 6.3 7 6.3 8.3 C6.3 9.6 5.1 10.3 3.5 10.3 C2.1 10.3 1 9.7 0.6 8.7 M3.5 0.2 V11.8" stroke="#34475b" stroke-width="1.25" fill="none"/></svg>
<div class="b" style="left:1017.00px;top:142.50px;width:40.8px;height:16px;overflow:hidden"><div class="t" style="left:0;top:1.64px;font-size:12px;color:#151515;-webkit-text-stroke:0.25px #151515">6.666666667</div></div>
<div class="b" style="left:1171.60px;top:138.30px;width:88.50px;height:23.20px;background:#fff;border:1px solid #ececec;border-radius:4px"></div>
<div class="b" style="left:1171.60px;top:138.30px;width:23.30px;height:23.20px;background:#e3f1fd;border:1px solid #d3dde8;border-radius:4px 0 0 4px"></div>
<svg class="b" style="left:1179.50px;top:144.40px" width="7" height="12" viewBox="0 0 7 12"><path d="M6.3 3.3 C5.8 2.3 4.8 1.7 3.5 1.7 C1.9 1.7 0.9 2.6 0.9 3.8 C0.9 5.2 2.1 5.6 3.5 6 C5.1 6.4 6.3 7 6.3 8.3 C6.3 9.6 5.1 10.3 3.5 10.3 C2.1 10.3 1 9.7 0.6 8.7 M3.5 0.2 V11.8" stroke="#34475b" stroke-width="1.25" fill="none"/></svg>
<div class="b" style="left:1203.90px;top:142.50px;width:40.8px;height:16px;overflow:hidden"><div class="t" style="left:0;top:1.64px;font-size:12px;color:#151515;-webkit-text-stroke:0.25px #151515">6.666666667</div></div>
<div class="b" style="left:1358.50px;top:138.30px;width:88.50px;height:23.20px;background:#fff;border:1px solid #ececec;border-radius:4px"></div>
<div class="b" style="left:1358.50px;top:138.30px;width:23.30px;height:23.20px;background:#e3f1fd;border:1px solid #d3dde8;border-radius:4px 0 0 4px"></div>
<svg class="b" style="left:1366.40px;top:144.40px" width="7" height="12" viewBox="0 0 7 12"><path d="M6.3 3.3 C5.8 2.3 4.8 1.7 3.5 1.7 C1.9 1.7 0.9 2.6 0.9 3.8 C0.9 5.2 2.1 5.6 3.5 6 C5.1 6.4 6.3 7 6.3 8.3 C6.3 9.6 5.1 10.3 3.5 10.3 C2.1 10.3 1 9.7 0.6 8.7 M3.5 0.2 V11.8" stroke="#34475b" stroke-width="1.25" fill="none"/></svg>
<div class="b" style="left:1390.80px;top:142.50px;width:40.8px;height:16px;overflow:hidden"><div class="t" style="left:0;top:1.64px;font-size:12px;color:#151515;-webkit-text-stroke:0.25px #151515">6.666666667</div></div>
<div class="b" style="left:0.00px;top:214.50px;width:1496.00px;height:1.00px;background:#e6e6e6"></div>
<div class="t" style="left:-206.40px;width:600px;text-align:center;top:186.23px;font-size:12.6px;font-weight:normal;color:#3e4c5c;-webkit-text-stroke:0.25px #3e4c5c;">04:00</div>
<div class="b" style="left:237.10px;top:181.30px;width:88.50px;height:23.20px;background:#fff;border:1px solid #ececec;border-radius:4px"></div>
<div class="b" style="left:237.10px;top:181.30px;width:23.30px;height:23.20px;background:#e3f1fd;border:1px solid #d3dde8;border-radius:4px 0 0 4px"></div>
<svg class="b" style="left:245.00px;top:187.40px" width="7" height="12" viewBox="0 0 7 12"><path d="M6.3 3.3 C5.8 2.3 4.8 1.7 3.5 1.7 C1.9 1.7 0.9 2.6 0.9 3.8 C0.9 5.2 2.1 5.6 3.5 6 C5.1 6.4 6.3 7 6.3 8.3 C6.3 9.6 5.1 10.3 3.5 10.3 C2.1 10.3 1 9.7 0.6 8.7 M3.5 0.2 V11.8" stroke="#34475b" stroke-width="1.25" fill="none"/></svg>
<div class="b" style="left:269.40px;top:185.50px;width:40.8px;height:16px;overflow:hidden"><div class="t" style="left:0;top:1.64px;font-size:12px;color:#151515;-webkit-text-stroke:0.25px #151515">8.333333333</div></div>
<div class="b" style="left:424.00px;top:181.30px;width:88.50px;height:23.20px;background:#fff;border:1px solid #ececec;border-radius:4px"></div>
<div class="b" style="left:424.00px;top:181.30px;width:23.30px;height:23.20px;background:#e3f1fd;border:1px solid #d3dde8;border-radius:4px 0 0 4px"></div>
<svg class="b" style="left:431.90px;top:187.40px" width="7" height="12" viewBox="0 0 7 12"><path d="M6.3 3.3 C5.8 2.3 4.8 1.7 3.5 1.7 C1.9 1.7 0.9 2.6 0.9 3.8 C0.9 5.2 2.1 5.6 3.5 6 C5.1 6.4 6.3 7 6.3 8.3 C6.3 9.6 5.1 10.3 3.5 10.3 C2.1 10.3 1 9.7 0.6 8.7 M3.5 0.2 V11.8" stroke="#34475b" stroke-width="1.25" fill="none"/></svg>
<div class="b" style="left:456.30px;top:185.50px;width:40.8px;height:16px;overflow:hidden"><div class="t" style="left:0;top:1.64px;font-size:12px;color:#151515;-webkit-text-stroke:0.25px #151515">8.333333333</div></div>
<div class="b" style="left:610.90px;top:181.30px;width:88.50px;height:23.20px;background:#fff;border:1px solid #ececec;border-radius:4px"></div>
<div class="b" style="left:610.90px;top:181.30px;width:23.30px;height:23.20px;background:#e3f1fd;border:1px solid #d3dde8;border-radius:4px 0 0 4px"></div>
<svg class="b" style="left:618.80px;top:187.40px" width="7" height="12" viewBox="0 0 7 12"><path d="M6.3 3.3 C5.8 2.3 4.8 1.7 3.5 1.7 C1.9 1.7 0.9 2.6 0.9 3.8 C0.9 5.2 2.1 5.6 3.5 6 C5.1 6.4 6.3 7 6.3 8.3 C6.3 9.6 5.1 10.3 3.5 10.3 C2.1 10.3 1 9.7 0.6 8.7 M3.5 0.2 V11.8" stroke="#34475b" stroke-width="1.25" fill="none"/></svg>
<div class="b" style="left:643.20px;top:185.50px;width:40.8px;height:16px;overflow:hidden"><div class="t" style="left:0;top:1.64px;font-size:12px;color:#151515;-webkit-text-stroke:0.25px #151515">8.333333333</div></div>
<div class="b" style="left:797.80px;top:181.30px;width:88.50px;height:23.20px;background:#fff;border:1px solid #ececec;border-radius:4px"></div>
<div class="b" style="left:797.80px;top:181.30px;width:23.30px;height:23.20px;background:#e3f1fd;border:1px solid #d3dde8;border-radius:4px 0 0 4px"></div>
<svg class="b" style="left:805.70px;top:187.40px" width="7" height="12" viewBox="0 0 7 12"><path d="M6.3 3.3 C5.8 2.3 4.8 1.7 3.5 1.7 C1.9 1.7 0.9 2.6 0.9 3.8 C0.9 5.2 2.1 5.6 3.5 6 C5.1 6.4 6.3 7 6.3 8.3 C6.3 9.6 5.1 10.3 3.5 10.3 C2.1 10.3 1 9.7 0.6 8.7 M3.5 0.2 V11.8" stroke="#34475b" stroke-width="1.25" fill="none"/></svg>
<div class="b" style="left:830.10px;top:185.50px;width:40.8px;height:16px;overflow:hidden"><div class="t" style="left:0;top:1.64px;font-size:12px;color:#151515;-webkit-text-stroke:0.25px #151515">8.333333333</div></div>
<div class="b" style="left:984.70px;top:181.30px;width:88.50px;height:23.20px;background:#fff;border:1px solid #ececec;border-radius:4px"></div>
<div class="b" style="left:984.70px;top:181.30px;width:23.30px;height:23.20px;background:#e3f1fd;border:1px solid #d3dde8;border-radius:4px 0 0 4px"></div>
<svg class="b" style="left:992.60px;top:187.40px" width="7" height="12" viewBox="0 0 7 12"><path d="M6.3 3.3 C5.8 2.3 4.8 1.7 3.5 1.7 C1.9 1.7 0.9 2.6 0.9 3.8 C0.9 5.2 2.1 5.6 3.5 6 C5.1 6.4 6.3 7 6.3 8.3 C6.3 9.6 5.1 10.3 3.5 10.3 C2.1 10.3 1 9.7 0.6 8.7 M3.5 0.2 V11.8" stroke="#34475b" stroke-width="1.25" fill="none"/></svg>
<div class="b" style="left:1017.00px;top:185.50px;width:40.8px;height:16px;overflow:hidden"><div class="t" style="left:0;top:1.64px;font-size:12px;color:#151515;-webkit-text-stroke:0.25px #151515">8.333333333</div></div>
<div class="b" style="left:1171.60px;top:181.30px;width:88.50px;height:23.20px;background:#fff;border:1px solid #ececec;border-radius:4px"></div>
<div class="b" style="left:1171.60px;top:181.30px;width:23.30px;height:23.20px;background:#e3f1fd;border:1px solid #d3dde8;border-radius:4px 0 0 4px"></div>
<svg class="b" style="left:1179.50px;top:187.40px" width="7" height="12" viewBox="0 0 7 12"><path d="M6.3 3.3 C5.8 2.3 4.8 1.7 3.5 1.7 C1.9 1.7 0.9 2.6 0.9 3.8 C0.9 5.2 2.1 5.6 3.5 6 C5.1 6.4 6.3 7 6.3 8.3 C6.3 9.6 5.1 10.3 3.5 10.3 C2.1 10.3 1 9.7 0.6 8.7 M3.5 0.2 V11.8" stroke="#34475b" stroke-width="1.25" fill="none"/></svg>
<div class="b" style="left:1203.90px;top:185.50px;width:40.8px;height:16px;overflow:hidden"><div class="t" style="left:0;top:1.64px;font-size:12px;color:#151515;-webkit-text-stroke:0.25px #151515">8.333333333</div></div>
<div class="b" style="left:1358.50px;top:181.30px;width:88.50px;height:23.20px;background:#fff;border:1px solid #ececec;border-radius:4px"></div>
<div class="b" style="left:1358.50px;top:181.30px;width:23.30px;height:23.20px;background:#e3f1fd;border:1px solid #d3dde8;border-radius:4px 0 0 4px"></div>
<svg class="b" style="left:1366.40px;top:187.40px" width="7" height="12" viewBox="0 0 7 12"><path d="M6.3 3.3 C5.8 2.3 4.8 1.7 3.5 1.7 C1.9 1.7 0.9 2.6 0.9 3.8 C0.9 5.2 2.1 5.6 3.5 6 C5.1 6.4 6.3 7 6.3 8.3 C6.3 9.6 5.1 10.3 3.5 10.3 C2.1 10.3 1 9.7 0.6 8.7 M3.5 0.2 V11.8" stroke="#34475b" stroke-width="1.25" fill="none"/></svg>
<div class="b" style="left:1390.80px;top:185.50px;width:40.8px;height:16px;overflow:hidden"><div class="t" style="left:0;top:1.64px;font-size:12px;color:#151515;-webkit-text-stroke:0.25px #151515">8.333333333</div></div>
<div class="t" style="left:-206.40px;width:600px;text-align:center;top:229.23px;font-size:12.6px;font-weight:normal;color:#3e4c5c;-webkit-text-stroke:0.25px #3e4c5c;">05:00</div>
<div class="b" style="left:237.10px;top:224.30px;width:88.50px;height:23.20px;background:#fff;border:1px solid #ececec;border-radius:4px"></div>
<div class="b" style="left:237.10px;top:224.30px;width:23.30px;height:23.20px;background:#e3f1fd;border:1px solid #d3dde8;border-radius:4px 0 0 4px"></div>
<svg class="b" style="left:245.00px;top:230.40px" width="7" height="12" viewBox="0 0 7 12"><path d="M6.3 3.3 C5.8 2.3 4.8 1.7 3.5 1.7 C1.9 1.7 0.9 2.6 0.9 3.8 C0.9 5.2 2.1 5.6 3.5 6 C5.1 6.4 6.3 7 6.3 8.3 C6.3 9.6 5.1 10.3 3.5 10.3 C2.1 10.3 1 9.7 0.6 8.7 M3.5 0.2 V11.8" stroke="#34475b" stroke-width="1.25" fill="none"/></svg>
<div class="b" style="left:269.40px;top:228.50px;width:40.8px;height:16px;overflow:hidden"><div class="t" style="left:0;top:1.64px;font-size:12px;color:#151515;-webkit-text-stroke:0.25px #151515">10</div></div>
<div class="b" style="left:424.00px;top:224.30px;width:88.50px;height:23.20px;background:#fff;border:1px solid #ececec;border-radius:4px"></div>
<div class="b" style="left:424.00px;top:224.30px;width:23.30px;height:23.20px;background:#e3f1fd;border:1px solid #d3dde8;border-radius:4px 0 0 4px"></div>
<svg class="b" style="left:431.90px;top:230.40px" width="7" height="12" viewBox="0 0 7 12"><path d="M6.3 3.3 C5.8 2.3 4.8 1.7 3.5 1.7 C1.9 1.7 0.9 2.6 0.9 3.8 C0.9 5.2 2.1 5.6 3.5 6 C5.1 6.4 6.3 7 6.3 8.3 C6.3 9.6 5.1 10.3 3.5 10.3 C2.1 10.3 1 9.7 0.6 8.7 M3.5 0.2 V11.8" stroke="#34475b" stroke-width="1.25" fill="none"/></svg>
<div class="b" style="left:456.30px;top:228.50px;width:40.8px;height:16px;overflow:hidden"><div class="t" style="left:0;top:1.64px;font-size:12px;color:#151515;-webkit-text-stroke:0.25px #151515">10</div></div>
<div class="b" style="left:610.90px;top:224.30px;width:88.50px;height:23.20px;background:#fff;border:1px solid #ececec;border-radius:4px"></div>
<div class="b" style="left:610.90px;top:224.30px;width:23.30px;height:23.20px;background:#e3f1fd;border:1px solid #d3dde8;border-radius:4px 0 0 4px"></div>
<svg class="b" style="left:618.80px;top:230.40px" width="7" height="12" viewBox="0 0 7 12"><path d="M6.3 3.3 C5.8 2.3 4.8 1.7 3.5 1.7 C1.9 1.7 0.9 2.6 0.9 3.8 C0.9 5.2 2.1 5.6 3.5 6 C5.1 6.4 6.3 7 6.3 8.3 C6.3 9.6 5.1 10.3 3.5 10.3 C2.1 10.3 1 9.7 0.6 8.7 M3.5 0.2 V11.8" stroke="#34475b" stroke-width="1.25" fill="none"/></svg>
<div class="b" style="left:643.20px;top:228.50px;width:40.8px;height:16px;overflow:hidden"><div class="t" style="left:0;top:1.64px;font-size:12px;color:#151515;-webkit-text-stroke:0.25px #151515">10</div></div>
<div class="b" style="left:797.80px;top:224.30px;width:88.50px;height:23.20px;background:#fff;border:1px solid #ececec;border-radius:4px"></div>
<div class="b" style="left:797.80px;top:224.30px;width:23.30px;height:23.20px;background:#e3f1fd;border:1px solid #d3dde8;border-radius:4px 0 0 4px"></div>
<svg class="b" style="left:805.70px;top:230.40px" width="7" height="12" viewBox="0 0 7 12"><path d="M6.3 3.3 C5.8 2.3 4.8 1.7 3.5 1.7 C1.9 1.7 0.9 2.6 0.9 3.8 C0.9 5.2 2.1 5.6 3.5 6 C5.1 6.4 6.3 7 6.3 8.3 C6.3 9.6 5.1 10.3 3.5 10.3 C2.1 10.3 1 9.7 0.6 8.7 M3.5 0.2 V11.8" stroke="#34475b" stroke-width="1.25" fill="none"/></svg>
<div class="b" style="left:830.10px;top:228.50px;width:40.8px;height:16px;overflow:hidden"><div class="t" style="left:0;top:1.64px;font-size:12px;color:#151515;-webkit-text-stroke:0.25px #151515">10</div></div>
<div class="b" style="left:984.70px;top:224.30px;width:88.50px;height:23.20px;background:#fff;border:1px solid #ececec;border-radius:4px"></div>
<div class="b" style="left:984.70px;top:224.30px;width:23.30px;height:23.20px;background:#e3f1fd;border:1px solid #d3dde8;border-radius:4px 0 0 4px"></div>
<svg class="b" style="left:992.60px;top:230.40px" width="7" height="12" viewBox="0 0 7 12"><path d="M6.3 3.3 C5.8 2.3 4.8 1.7 3.5 1.7 C1.9 1.7 0.9 2.6 0.9 3.8 C0.9 5.2 2.1 5.6 3.5 6 C5.1 6.4 6.3 7 6.3 8.3 C6.3 9.6 5.1 10.3 3.5 10.3 C2.1 10.3 1 9.7 0.6 8.7 M3.5 0.2 V11.8" stroke="#34475b" stroke-width="1.25" fill="none"/></svg>
<div class="b" style="left:1017.00px;top:228.50px;width:40.8px;height:16px;overflow:hidden"><div class="t" style="left:0;top:1.64px;font-size:12px;color:#151515;-webkit-text-stroke:0.25px #151515">10</div></div>
<div class="b" style="left:1171.60px;top:224.30px;width:88.50px;height:23.20px;background:#fff;border:1px solid #ececec;border-radius:4px"></div>
<div class="b" style="left:1171.60px;top:224.30px;width:23.30px;height:23.20px;background:#e3f1fd;border:1px solid #d3dde8;border-radius:4px 0 0 4px"></div>
<svg class="b" style="left:1179.50px;top:230.40px" width="7" height="12" viewBox="0 0 7 12"><path d="M6.3 3.3 C5.8 2.3 4.8 1.7 3.5 1.7 C1.9 1.7 0.9 2.6 0.9 3.8 C0.9 5.2 2.1 5.6 3.5 6 C5.1 6.4 6.3 7 6.3 8.3 C6.3 9.6 5.1 10.3 3.5 10.3 C2.1 10.3 1 9.7 0.6 8.7 M3.5 0.2 V11.8" stroke="#34475b" stroke-width="1.25" fill="none"/></svg>
<div class="b" style="left:1203.90px;top:228.50px;width:40.8px;height:16px;overflow:hidden"><div class="t" style="left:0;top:1.64px;font-size:12px;color:#151515;-webkit-text-stroke:0.25px #151515">10</div></div>
<div class="b" style="left:1358.50px;top:224.30px;width:88.50px;height:23.20px;background:#fff;border:1px solid #ececec;border-radius:4px"></div>
<div class="b" style="left:1358.50px;top:224.30px;width:23.30px;height:23.20px;background:#e3f1fd;border:1px solid #d3dde8;border-radius:4px 0 0 4px"></div>
<svg class="b" style="left:1366.40px;top:230.40px" width="7" height="12" viewBox="0 0 7 12"><path d="M6.3 3.3 C5.8 2.3 4.8 1.7 3.5 1.7 C1.9 1.7 0.9 2.6 0.9 3.8 C0.9 5.2 2.1 5.6 3.5 6 C5.1 6.4 6.3 7 6.3 8.3 C6.3 9.6 5.1 10.3 3.5 10.3 C2.1 10.3 1 9.7 0.6 8.7 M3.5 0.2 V11.8" stroke="#34475b" stroke-width="1.25" fill="none"/></svg>
<div class="b" style="left:1390.80px;top:228.50px;width:40.8px;height:16px;overflow:hidden"><div class="t" style="left:0;top:1.64px;font-size:12px;color:#151515;-webkit-text-stroke:0.25px #151515">10</div></div>
</div>
<div class="b" style="left:1512.20px;top:364.20px;width:5.60px;height:72.80px;background:#6e6e6e;border-radius:3px"></div>
<div class="b" style="left:1432.00px;top:682.00px;width:86.00px;height:30.00px;background:#e2e9f3;border-radius:5px"></div>
<div class="t" style="left:1175.00px;width:600px;text-align:center;top:691.08px;font-size:12.9px;font-weight:bold;color:#2a6fd6;">Next</div>
</body></html>
